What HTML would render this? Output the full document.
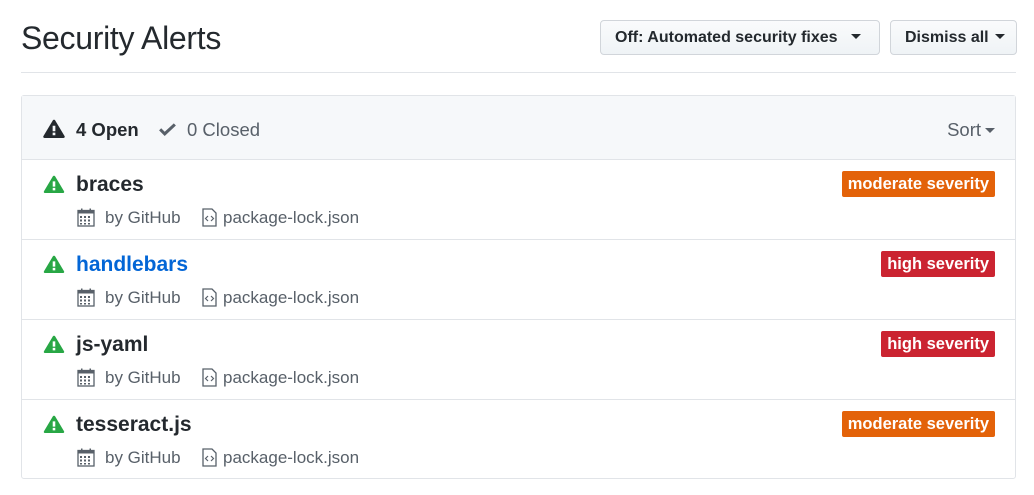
<!DOCTYPE html>
<html><head><meta charset="utf-8"><style>
*{box-sizing:border-box;margin:0;padding:0}
body{width:1034px;height:495px;background:#fff;font-family:"Liberation Sans",Arial,sans-serif;color:#24292e;position:relative;overflow:hidden}
h1{position:absolute;left:21px;top:20px;font-size:32px;font-weight:400;letter-spacing:-0.3px}
.hr{position:absolute;left:21px;width:995px;top:72px;border-top:1px solid #e1e4e8}
.btn{position:absolute;top:20px;height:35px;border:1px solid #d1d5da;border-radius:4px;background:linear-gradient(#fafbfc,#eff3f6);font-weight:700;font-size:16px;line-height:33px;padding-left:14px;color:#24292e;white-space:nowrap}
.car{display:inline-block;width:0;height:0;border-left:5px solid transparent;border-right:5px solid transparent;border-top:5px solid #24292e;vertical-align:middle;margin-left:6px;position:relative;top:-1px}
.box{position:absolute;left:21px;top:95px;width:995px;height:384px;border:1px solid #e1e4e8;border-radius:3px}
.head{height:64px;background:#f6f8fa;border-bottom:1px solid #e1e4e8;position:relative;font-size:18.5px}
.row{height:80px;border-bottom:1px solid #e1e4e8;position:relative}
.row:last-child{border-bottom:none}
.tri{position:absolute;left:21px;top:15px}
.name{position:absolute;left:54px;top:13px;font-size:21px;font-weight:700}
.meta{position:absolute;top:48px;font-size:17px;color:#586069}
.badge{position:absolute;right:20px;top:11px;height:26px;line-height:26px;padding:0 6px;color:#fff;font-weight:700;font-size:16.5px;border-radius:2px}
.mod{background:#e36209}.high{background:#cb2431}
</style></head><body>
<h1>Security Alerts</h1>
<div class="hr"></div>
<div class="btn" style="left:600px;width:280px">Off: Automated security fixes <span class="car" style="margin-left:9px"></span></div>
<div class="btn" style="left:890px;width:127px">Dismiss all<span class="car"></span></div>
<div class="box">
<div class="head">
<svg style="position:absolute;left:21px;top:23px" width="22" height="19" viewBox="0 0 16 14"><path fill="#24292e" d="M8.9 1.1c-.4-.7-1.4-.7-1.8 0L.2 12.6C-.2 13.3.3 14 1.1 14h13.8c.8 0 1.3-.7.9-1.4L8.9 1.1zM9 12H7v-2h2v2zm0-3H7V5h2v4z"/></svg>
<span style="position:absolute;left:54px;top:23px;font-weight:700">4 Open</span>
<svg style="position:absolute;left:137px;top:26px" width="17" height="14" viewBox="0 0 12 10"><path fill="#586069" d="M12 2.5l-8 7.5L0 6l1.5-1.5L4 7l6.5-6z"/></svg>
<span style="position:absolute;left:165px;top:23px;color:#586069">0 Closed</span>
<span style="position:absolute;right:20px;top:23px;color:#586069">Sort<span class="car" style="border-top-color:#586069;margin-left:4px"></span></span>
</div>
<div class="row"><svg class="tri" width="22" height="18" viewBox="0 0 16 14"><path fill="#28a745" d="M8.9 1.1c-.4-.7-1.4-.7-1.8 0L.2 12.6C-.2 13.3.3 14 1.1 14h13.8c.8 0 1.3-.7.9-1.4L8.9 1.1zM9 12H7v-2h2v2zm0-3H7V5h2v4z"/></svg><span class="name">braces</span><span class="badge mod">moderate severity</span><div class="m"></div></div>
<div class="row"><svg class="tri" width="22" height="18" viewBox="0 0 16 14"><path fill="#28a745" d="M8.9 1.1c-.4-.7-1.4-.7-1.8 0L.2 12.6C-.2 13.3.3 14 1.1 14h13.8c.8 0 1.3-.7.9-1.4L8.9 1.1zM9 12H7v-2h2v2zm0-3H7V5h2v4z"/></svg><span class="name" style="color:#0366d6">handlebars</span><span class="badge high">high severity</span><div class="m"></div></div>
<div class="row"><svg class="tri" width="22" height="18" viewBox="0 0 16 14"><path fill="#28a745" d="M8.9 1.1c-.4-.7-1.4-.7-1.8 0L.2 12.6C-.2 13.3.3 14 1.1 14h13.8c.8 0 1.3-.7.9-1.4L8.9 1.1zM9 12H7v-2h2v2zm0-3H7V5h2v4z"/></svg><span class="name">js-yaml</span><span class="badge high">high severity</span><div class="m"></div></div>
<div class="row"><svg class="tri" width="22" height="18" viewBox="0 0 16 14"><path fill="#28a745" d="M8.9 1.1c-.4-.7-1.4-.7-1.8 0L.2 12.6C-.2 13.3.3 14 1.1 14h13.8c.8 0 1.3-.7.9-1.4L8.9 1.1zM9 12H7v-2h2v2zm0-3H7V5h2v4z"/></svg><span class="name">tesseract.js</span><span class="badge mod">moderate severity</span><div class="m"></div></div>
</div>
<script>
document.querySelectorAll('.m').forEach(function(m){m.outerHTML=
'<svg style="position:absolute;left:55px;top:48px" width="18" height="19" viewBox="0 0 18 19"><rect x="1" y="2.5" width="16" height="15.5" fill="none" stroke="#586069" stroke-width="1.3"/><rect x="1" y="2.5" width="16" height="3" fill="#586069"/><rect x="4" y="0.5" width="1.5" height="3" fill="#586069"/><rect x="12.5" y="0.5" width="1.5" height="3" fill="#586069"/><g fill="#586069"><rect x="3" y="8" width="2" height="2"/><rect x="7" y="8" width="2" height="2"/><rect x="11" y="8" width="2" height="2"/><rect x="3" y="11.5" width="2" height="2"/><rect x="7" y="11.5" width="2" height="2"/><rect x="11" y="11.5" width="2" height="2"/><rect x="3" y="15" width="2" height="1.5"/><rect x="7" y="15" width="2" height="1.5"/><rect x="11" y="15" width="2" height="1.5"/></g></svg>'+
'<span class="meta" style="left:83px">by GitHub</span>'+
'<svg style="position:absolute;left:180px;top:48px" width="15" height="19" viewBox="0 0 15 19"><path d="M1 1h9l4 4v13H1z" fill="none" stroke="#586069" stroke-width="1.3"/><path d="M6 8l-2.5 2.5L6 13M9 8l2.5 2.5L9 13" fill="none" stroke="#586069" stroke-width="1.2"/></svg>'+
'<span class="meta" style="left:201px">package-lock.json</span>';});
</script>
</body></html>
